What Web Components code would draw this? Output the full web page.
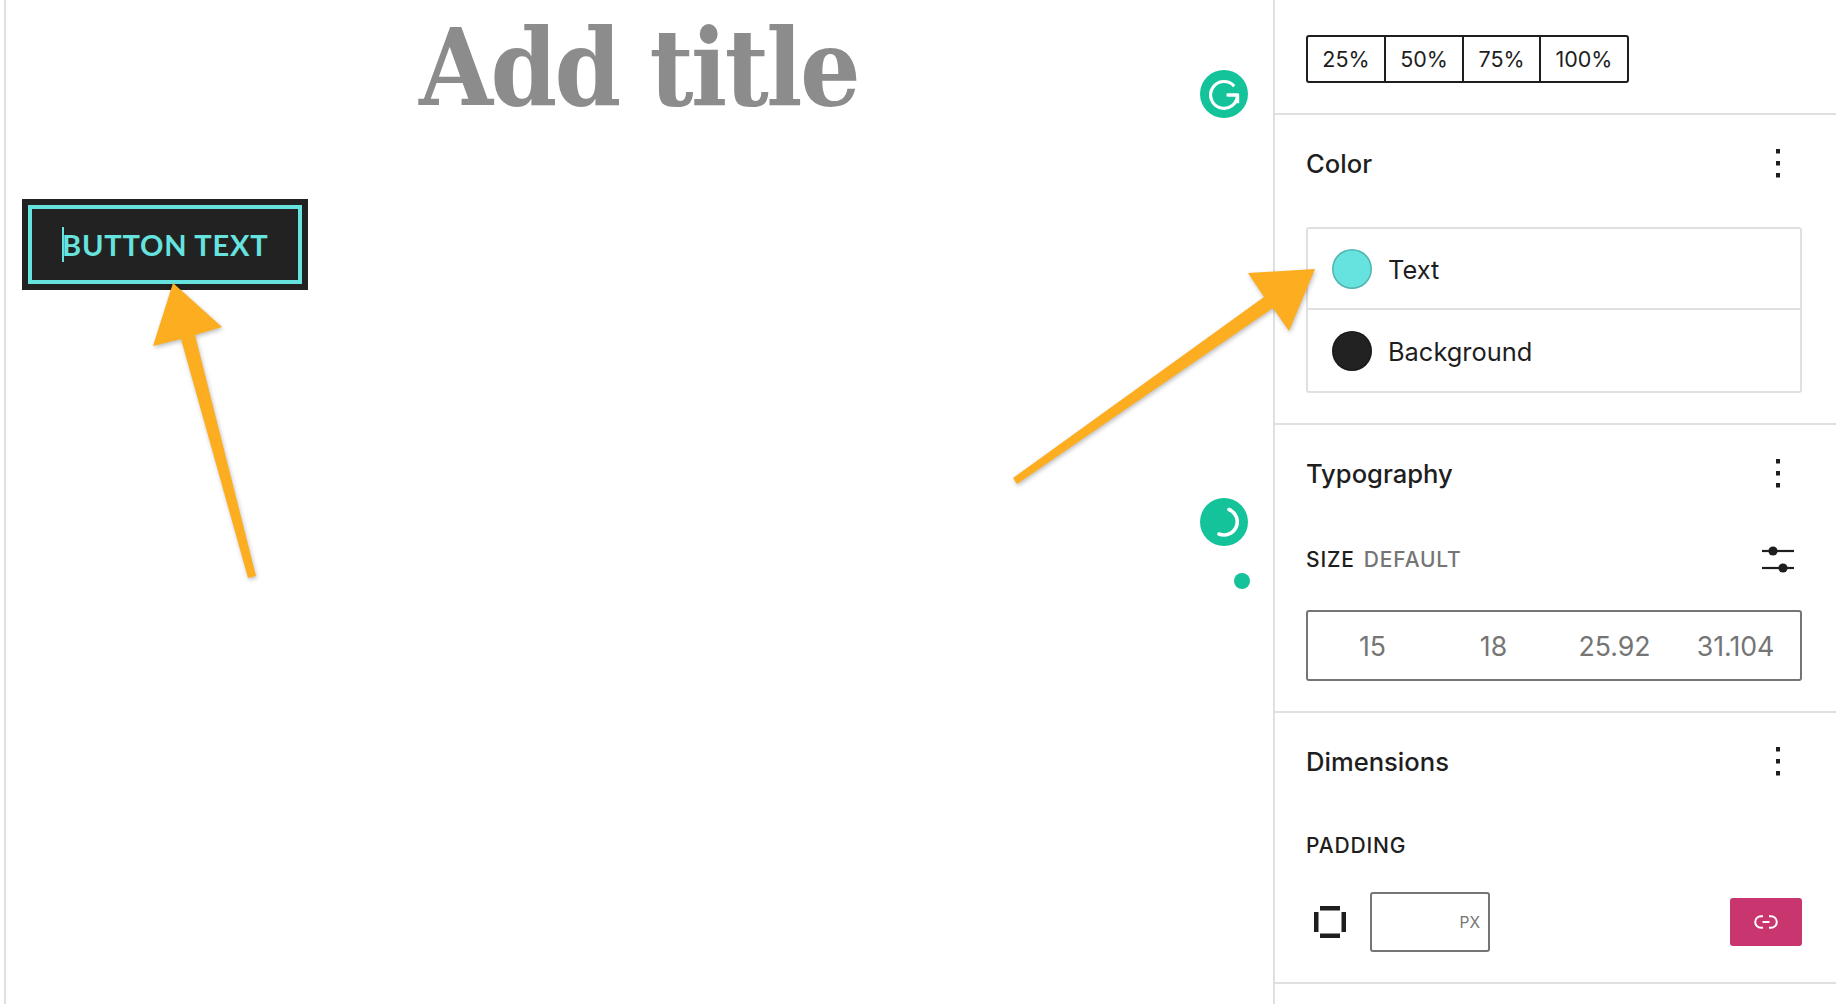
<!DOCTYPE html>
<html>
<head>
<meta charset="utf-8">
<style>
  html, body { margin: 0; height: 100%; background: #fff; overflow: hidden; }
  body {
    position: relative;
    display: flex;
    height: 1004px;
    font-family: Inter, "Liberation Sans", sans-serif;
    color: #1e1e1e;
  }
</style>
</head>
<body>
  <editor-canvas>
    <post-title>Add title</post-title>
    <block-button>BUTTON TEXT</block-button>
  </editor-canvas>

  <editor-sidebar>
    <width-group></width-group>
    <panel-section heading="Color">
      <color-panel>
        <color-item color="#66e3df" label="Text"></color-item>
        <color-item color="#222222" label="Background"></color-item>
      </color-panel>
    </panel-section>
    <panel-section heading="Typography">
      <size-picker></size-picker>
    </panel-section>
    <panel-section heading="Dimensions">
      <padding-control></padding-control>
    </panel-section>
  </editor-sidebar>

  <grammarly-badge kind="logo" style="left:1200px;top:70px"></grammarly-badge>
  <grammarly-badge kind="spinner" style="left:1200px;top:498px"></grammarly-badge>
  <grammarly-badge kind="dot" style="left:1234px;top:573px"></grammarly-badge>
  <note-arrows></note-arrows>

<script>
// 画布
class EditorCanvas extends HTMLElement {
    constructor() {
        super();
        this.attachShadow({ mode: "open" });
        this.shadowRoot.innerHTML = `
            <style>
                :host {
                    display: block;
                    box-sizing: border-box;
                    width: 1269px;
                    height: 1004px;
                    margin-left: 4px;
                    border-left: 2px solid #e0e0e0;
                    flex: none;
                }
            </style>
            <slot></slot>
        `;
    }
}

class PostTitle extends HTMLElement {
    constructor() {
        super();
        this.attachShadow({ mode: "open" });
        this.shadowRoot.innerHTML = `
            <style>
                :host {
                    display: block;
                    height: 199px;
                    margin-left: -2px;
                    text-align: center;
                    font-family: "DejaVu Serif", "Liberation Serif", serif;
                    font-stretch: condensed;
                    font-weight: 700;
                    font-size: 106px;
                    line-height: 136px;
                    letter-spacing: -2.5px;
                    color: #8c8c8c;
                }
            </style>
            <slot></slot>
        `;
    }
}

class BlockButton extends HTMLElement {
    constructor() {
        super();
        this.attachShadow({ mode: "open" });
        this.shadowRoot.innerHTML = `
            <style>
                :host {
                    display: block;
                    box-sizing: border-box;
                    width: 286px;
                    height: 91px;
                    margin-left: 16px;
                    padding: 6px;
                    background: #222;
                }
                .inner {
                    box-sizing: border-box;
                    height: 79px;
                    border: 4px solid #66e3df;
                    display: flex;
                    align-items: center;
                    padding-left: 30px;
                    color: #66e3df;
                    font-family: Lato, "Liberation Sans", sans-serif;
                    font-weight: 700;
                    font-size: 29px;
                    letter-spacing: 0.8px;
                }
                .caret {
                    width: 2px;
                    height: 35px;
                    margin-right: -2px;
                    background: #66e3df;
                    flex: none;
                }
            </style>
            <div class="inner"><span class="caret"></span><slot></slot></div>
        `;
    }
}

// 侧边栏
class EditorSidebar extends HTMLElement {
    constructor() {
        super();
        this.attachShadow({ mode: "open" });
        this.shadowRoot.innerHTML = `
            <style>
                :host {
                    display: block;
                    box-sizing: border-box;
                    width: 563px;
                    height: 1004px;
                    border-left: 2px solid #e0e0e0;
                    flex: none;
                }
            </style>
            <slot></slot>
        `;
    }
}

class WidthGroup extends HTMLElement {
    constructor() {
        super();
        this.attachShadow({ mode: "open" });
        this.shadowRoot.innerHTML = `
            <style>
                :host {
                    display: block;
                    box-sizing: border-box;
                    height: 115px;
                    padding: 35px 0 0 31px;
                    border-bottom: 2px solid #e0e0e0;
                }
                .group {
                    display: inline-flex;
                    box-sizing: border-box;
                    height: 48px;
                    border: 2px solid #1e1e1e;
                    border-radius: 3px;
                    font-size: 21.5px;
                }
                span {
                    display: flex;
                    align-items: center;
                    justify-content: center;
                    box-sizing: border-box;
                    width: 78px;
                    border-right: 2px solid #1e1e1e;
                }
                span:nth-child(3) { width: 77px; }
                span:last-child { width: 86px; border-right: 0; }
            </style>
            <div class="group"><span>25%</span><span>50%</span><span>75%</span><span>100%</span></div>
        `;
    }
}

class PanelSection extends HTMLElement {
    constructor() {
        super();
        this.attachShadow({ mode: "open" });
        const heading = this.getAttribute("heading") || "";
        this.shadowRoot.innerHTML = `
            <style>
                :host {
                    display: block;
                    box-sizing: border-box;
                    padding: 24px 34px 30px 31px;
                    border-bottom: 2px solid #e0e0e0;
                }
                .head {
                    display: flex;
                    align-items: center;
                    justify-content: space-between;
                    height: 48px;
                    font-size: 25.6px;
                    font-weight: 500;
                }
                svg { width: 24px; height: 32px; margin-right: 12px; fill: #1e1e1e; }
            </style>
            <div class="head">
                <span>${heading}</span>
                <svg viewBox="0 0 24 32"><rect x="10" y="2" width="4" height="4.5"/><rect x="10" y="14" width="4" height="4.5"/><rect x="10" y="26" width="4" height="4.5"/></svg>
            </div>
            <slot></slot>
        `;
    }
}

class ColorPanel extends HTMLElement {
    constructor() {
        super();
        this.attachShadow({ mode: "open" });
        this.shadowRoot.innerHTML = `
            <style>
                :host {
                    display: block;
                    box-sizing: border-box;
                    height: 166px;
                    margin-top: 40px;
                    border: 2px solid #e0e0e0;
                    border-radius: 3px;
                }
                ::slotted(color-item:first-child) { border-bottom: 2px solid #e0e0e0; }
            </style>
            <slot></slot>
        `;
    }
}

class ColorItem extends HTMLElement {
    constructor() {
        super();
        this.attachShadow({ mode: "open" });
        const color = this.getAttribute("color");
        const label = this.getAttribute("label");
        this.shadowRoot.innerHTML = `
            <style>
                :host {
                    display: flex;
                    align-items: center;
                    box-sizing: border-box;
                    height: 81px;
                    padding-left: 24px;
                    gap: 16px;
                    font-size: 25.4px;
                }
                span { position: relative; top: 1px; }
                i {
                    width: 40px;
                    height: 40px;
                    border-radius: 50%;
                    background: ${color};
                    box-shadow: inset 0 0 0 1.5px rgba(0, 0, 0, 0.2);
                    flex: none;
                }
            </style>
            <i></i><span>${label}</span>
        `;
    }
}

class SizePicker extends HTMLElement {
    constructor() {
        super();
        this.attachShadow({ mode: "open" });
        this.shadowRoot.innerHTML = `
            <style>
                :host { display: block; }
                .row {
                    display: flex;
                    align-items: center;
                    justify-content: space-between;
                    height: 32px;
                    margin-top: 46px;
                    font-size: 21px;
                    letter-spacing: 0.85px;
                    font-weight: 500;
                }
                .row em { font-style: normal; color: #757575; margin-left: 9px; }
                .row svg { width: 32px; height: 28px; margin-right: 8px; }
                .sizes {
                    display: grid;
                    grid-template-columns: repeat(4, 121px);
                    box-sizing: border-box;
                    height: 71px;
                    margin-top: 35px;
                    padding: 1px 0 0 4px;
                    border: 2px solid #757575;
                    border-radius: 3px;
                    align-items: center;
                    text-align: center;
                    color: #757575;
                    font-size: 26.7px;
                }
            </style>
            <div class="row">
                <span>SIZE<em>DEFAULT</em></span>
                <svg viewBox="0 0 32 28" fill="#1e1e1e"><rect y="4.9" width="32" height="2.2"/><rect y="21.9" width="32" height="2.2"/><circle cx="11" cy="6" r="4.6"/><circle cx="21" cy="23" r="4.6"/></svg>
            </div>
            <div class="sizes"><span>15</span><span>18</span><span>25.92</span><span>31.104</span></div>
        `;
    }
}

class PaddingControl extends HTMLElement {
    constructor() {
        super();
        this.attachShadow({ mode: "open" });
        this.shadowRoot.innerHTML = `
            <style>
                :host { display: block; }
                .label {
                    height: 32px;
                    line-height: 32px;
                    margin-top: 45px;
                    font-size: 21px;
                    letter-spacing: 0.85px;
                    font-weight: 500;
                }
                .row {
                    display: flex;
                    align-items: center;
                    height: 60px;
                    margin-top: 30px;
                }
                .side { width: 32px; height: 32px; margin-left: 8px; flex: none; fill: #1e1e1e; }
                .unit {
                    display: flex;
                    align-items: center;
                    justify-content: flex-end;
                    box-sizing: border-box;
                    width: 120px;
                    height: 60px;
                    margin-left: 24px;
                    padding-right: 8px;
                    border: 2px solid #757575;
                    border-radius: 3px;
                    color: #757575;
                    font-size: 15.5px;
                }
                .link {
                    display: flex;
                    align-items: center;
                    justify-content: center;
                    width: 72px;
                    height: 48px;
                    margin-left: auto;
                    border-radius: 3px;
                    background: #c9356e;
                }
                .link svg { width: 24px; height: 14px; fill: none; stroke: #fff; stroke-width: 2; }
            </style>
            <div class="label">PADDING</div>
            <div class="row">
                <svg class="side" viewBox="0 0 32 32"><rect x="6" width="20" height="4.5"/><rect x="6" y="27.5" width="20" height="4.5"/><rect y="6" width="4.5" height="20"/><rect x="27.5" y="6" width="4.5" height="20"/></svg>
                <div class="unit">PX</div>
                <div class="link"><svg viewBox="0 0 24 14"><path d="M9 1.2H7a5.8 5.8 0 0 0 0 11.6h2M15 1.2h2a5.8 5.8 0 0 1 0 11.6h-2M8.5 7h7"/></svg></div>
            </div>
        `;
    }
}

// 悬浮元素
class GrammarlyBadge extends HTMLElement {
    constructor() {
        super();
        this.attachShadow({ mode: "open" });
        const kind = this.getAttribute("kind");
        const size = kind === "dot" ? 16 : 48;
        let icon = "";
        if (kind === "logo") {
            icon = `<svg viewBox="0 0 48 48" fill="none" stroke="#fff" stroke-width="3.2"><path d="M34.2 16.2A13.4 13.4 0 1 0 37.4 25H26.5"/><path d="M37.6 24.2v9M37.6 25H28" stroke-linejoin="miter"/></svg>`;
        } else if (kind === "spinner") {
            icon = `<svg viewBox="0 0 48 48" fill="none" stroke="#fff" stroke-width="3.6" stroke-linecap="round"><path d="M29 11.5A13 13 0 0 1 19 36"/></svg>`;
        }
        this.shadowRoot.innerHTML = `
            <style>
                :host {
                    position: absolute;
                    display: block;
                    width: ${size}px;
                    height: ${size}px;
                    border-radius: 50%;
                    background: #15c39a;
                }
                svg { display: block; width: 48px; height: 48px; }
            </style>
            ${icon}
        `;
    }
}

class NoteArrows extends HTMLElement {
    constructor() {
        super();
        this.attachShadow({ mode: "open" });
        this.shadowRoot.innerHTML = `
            <style>
                :host { position: absolute; left: 0; top: 0; display: block; width: 1836px; height: 1004px; pointer-events: none; }
                svg { display: block; filter: drop-shadow(1px 2px 2px rgba(0, 0, 0, 0.25)); }
            </style>
            <svg width="1836" height="1004" viewBox="0 0 1836 1004" fill="#fdad20">
                <polygon points="173,283 222,327 195,335 256,576 248,578 181,339 153,346"/>
                <polygon points="1315,269 1289,331 1273,308 1017,484 1013,478 1264,297 1248,273"/>
            </svg>
        `;
    }
}

// 注册自定义元素
customElements.define("editor-canvas", EditorCanvas);
customElements.define("post-title", PostTitle);
customElements.define("block-button", BlockButton);
customElements.define("editor-sidebar", EditorSidebar);
customElements.define("width-group", WidthGroup);
customElements.define("panel-section", PanelSection);
customElements.define("color-panel", ColorPanel);
customElements.define("color-item", ColorItem);
customElements.define("size-picker", SizePicker);
customElements.define("padding-control", PaddingControl);
customElements.define("grammarly-badge", GrammarlyBadge);
customElements.define("note-arrows", NoteArrows);
</script>
</body>
</html>
